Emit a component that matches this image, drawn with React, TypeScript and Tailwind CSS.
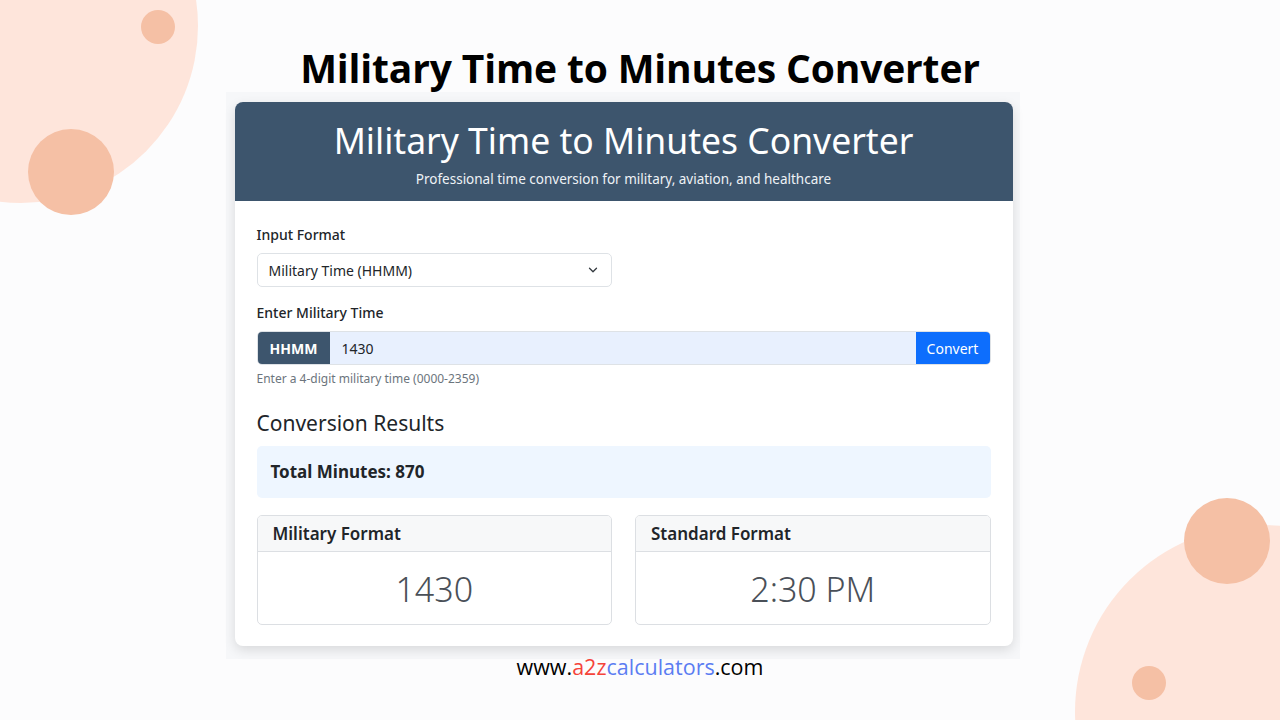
import { ChevronDown } from "lucide-react";

const bodyFont = "font-['Noto_Sans','Open_Sans',sans-serif]";

function ResultCard({ title, value }: { title: string; value: string }) {
  return (
    <div className="flex h-[110px] flex-col overflow-hidden rounded-[5px] border border-[#dcdfe3] bg-white">
      <div className="flex h-[36px] items-center border-b border-[#dcdfe3] bg-[#f7f8f9] px-[15px] text-[17px] font-semibold text-[#212529]">
        {title}
      </div>
      <div className="flex flex-1 items-center justify-center pt-[2px] text-[34px] font-light text-[#4a5058]">{value}</div>
    </div>
  );
}

export default function App() {
  return (
    <div className="relative h-[720px] w-full overflow-hidden bg-[#fcfcfd]">
      {/* decorative circles */}
      <div className="absolute left-[-156px] top-[-151px] h-[354px] w-[354px] rounded-full bg-[#fee5db]" />
      <div className="absolute left-[141px] top-[10px] h-[34px] w-[34px] rounded-full bg-[#f5c0a5]" />
      <div className="absolute left-[28px] top-[129px] h-[86px] w-[86px] rounded-full bg-[#f5c0a5]" />
      <div className="absolute left-[1075px] top-[525px] h-[374px] w-[374px] rounded-full bg-[#fee5db]" />
      <div className="absolute left-[1184px] top-[498px] h-[86px] w-[86px] rounded-full bg-[#f5c0a5]" />
      <div className="absolute left-[1132px] top-[666px] h-[34px] w-[34px] rounded-full bg-[#f5c0a5]" />

      <div className="relative flex flex-col items-center">
        <h1 className="mt-[44px] h-[48px] font-['Open_Sans',sans-serif] text-[39px] font-bold leading-[48px] tracking-[-0.15px] text-black">
          Military Time to Minutes Converter
        </h1>

        <div className="mr-[35px] w-[794px] bg-[#f6f7f9] pb-[13px] pl-[9px] pr-[7px] pt-[10px]">
          <div className={`overflow-hidden rounded-[8px] bg-white shadow-[0_4px_12px_rgba(0,0,0,0.12)] ${bodyFont}`}>
            <div className="flex h-[99px] flex-col items-center bg-[#3d556d] text-white">
              <div className="mt-[14px] text-[35.5px] leading-[48px]">Military Time to Minutes Converter</div>
              <div className="mt-[6px] text-[13.5px] leading-[18px] text-[#eef2f6]">
                Professional time conversion for military, aviation, and healthcare
              </div>
            </div>

            <div className="px-[22px] pb-[21px] pt-[24px] text-[#212529]">
              <div className="mb-[8px] text-[14px] font-medium leading-[20px]">Input Format</div>
              <div className="flex h-[34px] w-[355px] items-center justify-between rounded-[5px] border border-[#dee2e6] px-[11px] text-[14px] text-[#212529]">
                <span>Military Time (HHMM)</span>
                <ChevronDown size={14} strokeWidth={2.2} className="text-[#343a40]" />
              </div>

              <div className="mb-[8px] mt-[16px] text-[14px] font-medium leading-[20px]">Enter Military Time</div>
              <div className="flex h-[34px] overflow-hidden rounded-[5px] border border-[#dee2e6]">
                <div className="flex w-[72px] items-center justify-center bg-[#3d556d] text-[14px] font-bold text-white">HHMM</div>
                <div className="flex flex-1 items-center bg-[#e8f0fe] px-[12px] text-[14px] text-[#212529]">1430</div>
                <div className="flex w-[74px] items-center justify-center bg-[#0d6efd] text-[14px] text-white">Convert</div>
              </div>
              <div className="mt-[6px] text-[12px] leading-[16px] text-[#6c757d]">Enter a 4-digit military time (0000-2359)</div>

              <div className="mt-[22px] text-[21px] leading-[28px]">Conversion Results</div>

              <div className="mt-[9px] flex h-[52px] items-center rounded-[5px] bg-[#eef6ff] px-[14px] text-[17px] font-bold">
                Total Minutes: 870
              </div>

              <div className="mt-[17px] grid grid-cols-2 gap-[23px]">
                <ResultCard title="Military Format" value="1430" />
                <ResultCard title="Standard Format" value="2:30 PM" />
              </div>
            </div>
          </div>
        </div>

        <div className="mt-[-6px] font-['Open_Sans',sans-serif] text-[21.5px] leading-[28px] text-black">
          www.<span className="text-[#f5433a]">a2z</span>
          <span className="text-[#5b7cf2]">calculators</span>.com
        </div>
      </div>
    </div>
  );
}
